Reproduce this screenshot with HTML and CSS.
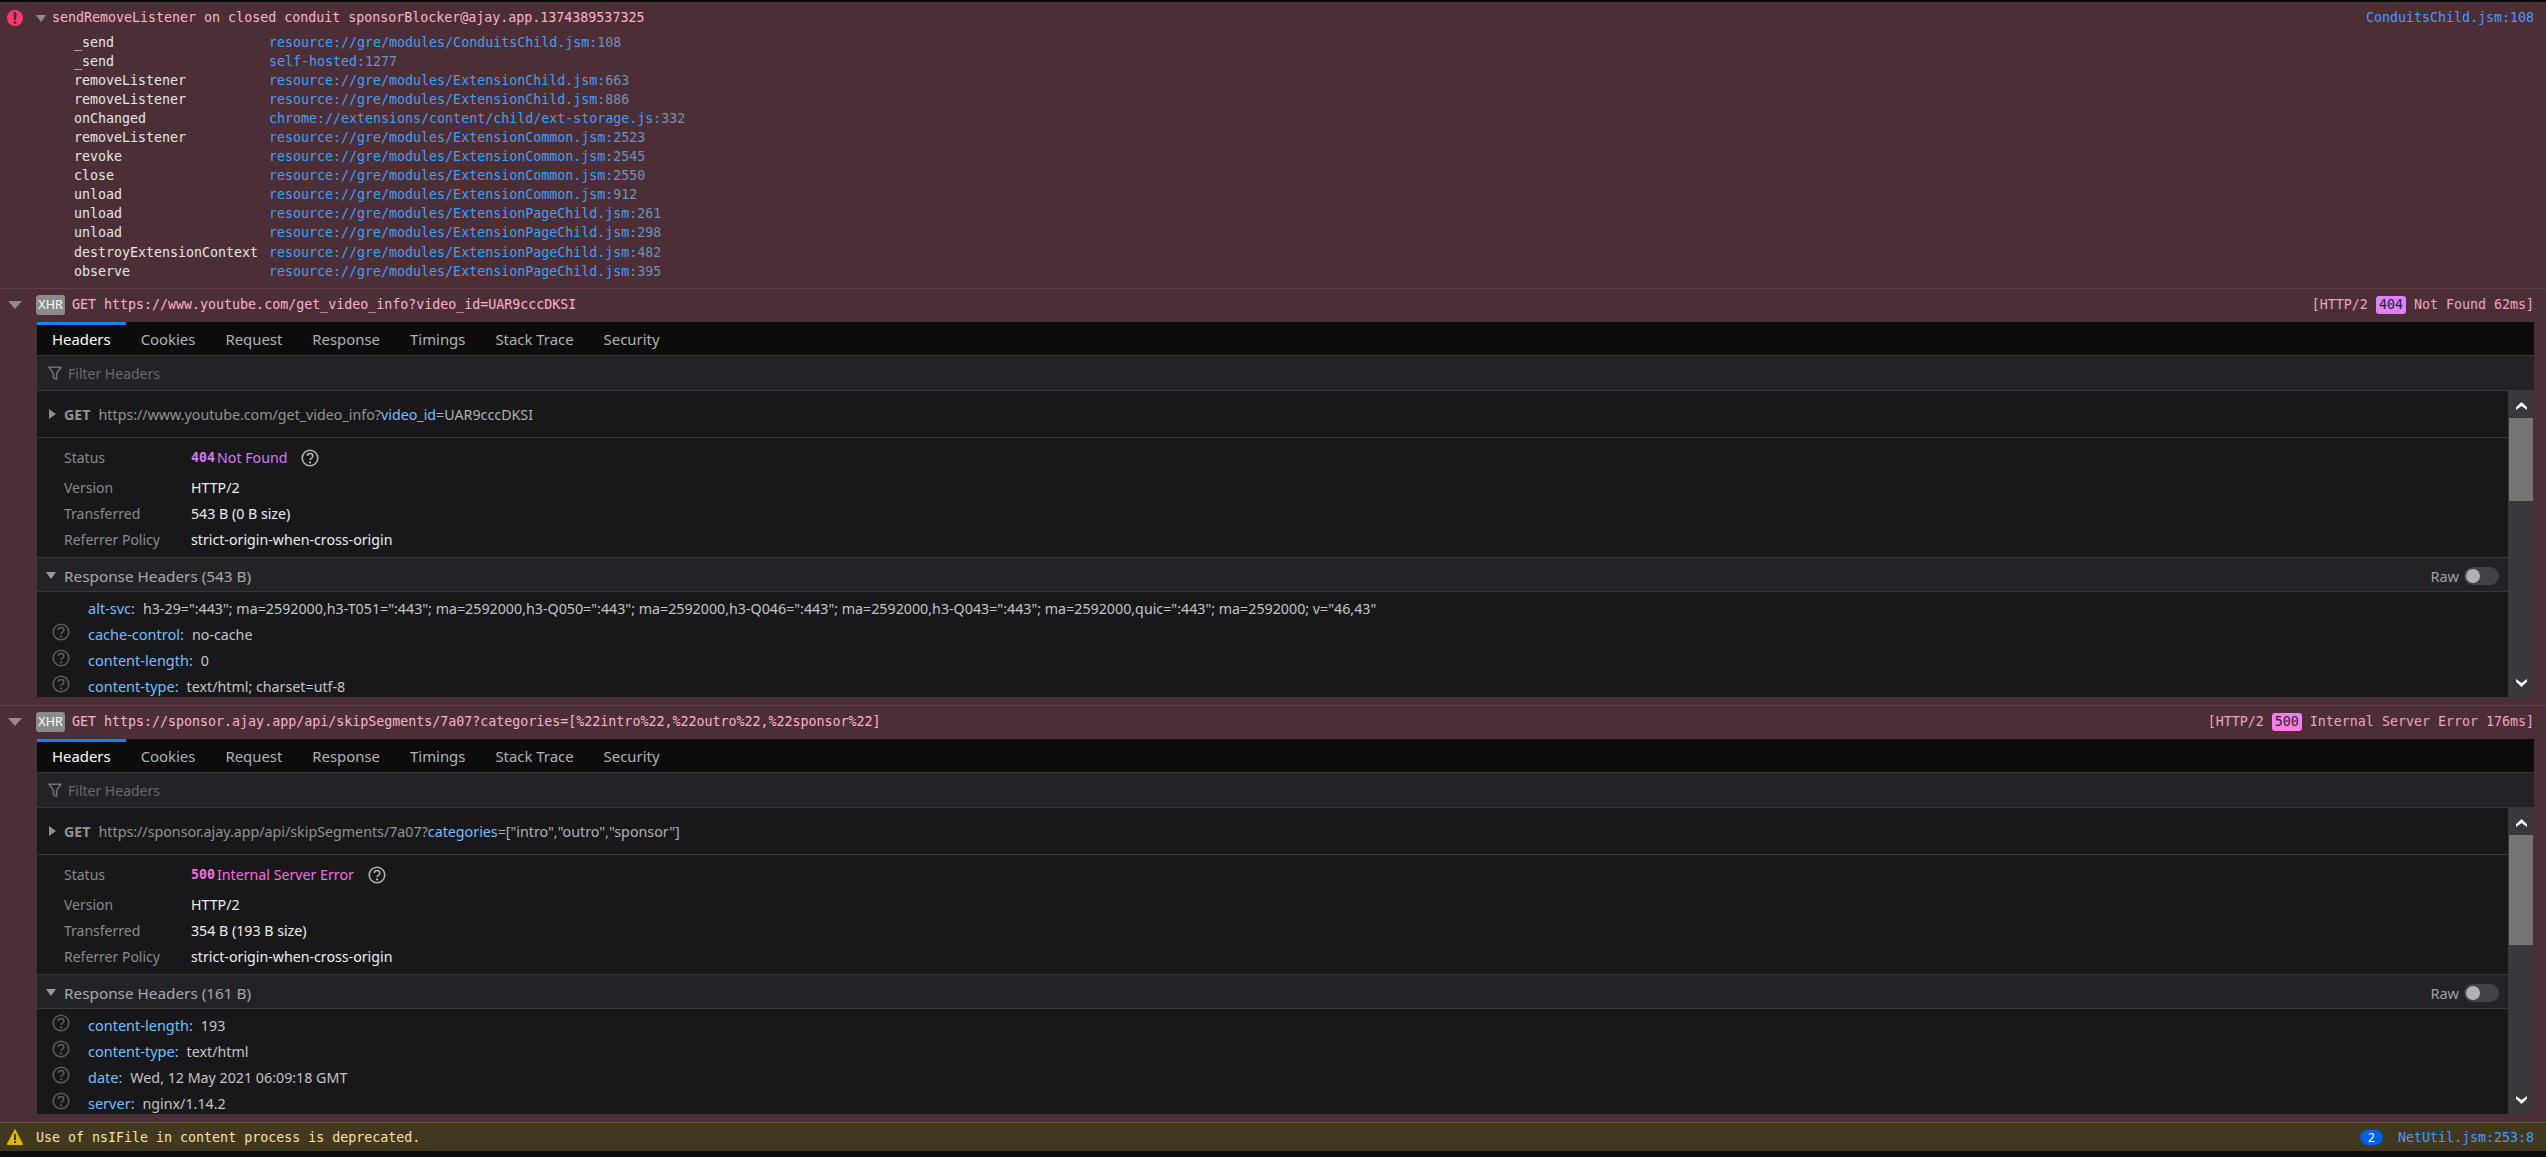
FILE: index.html
```html
<!DOCTYPE html>
<html lang="en">
<head>
<meta charset="utf-8">
<title>Browser Console</title>
<link rel="stylesheet" href="styles.css">
</head>
<body>
<svg class="defs" width="0" height="0" aria-hidden="true">
  <symbol id="help" viewBox="0 0 18 18"><circle cx="9" cy="9" r="7.8" fill="none" stroke="currentColor" stroke-width="1.6"/><path d="M6.3 7.1c0-1.6 1.2-2.6 2.8-2.6s2.7 1 2.7 2.4c0 1.2-.7 1.8-1.5 2.4-.7.5-1.1.9-1.1 1.8" fill="none" stroke="currentColor" stroke-width="1.6"/><circle cx="9" cy="13.4" r="1.1" fill="currentColor"/></symbol>
  <symbol id="filter" viewBox="0 0 14 15"><path d="M1 1.2h12L8.6 7.4v5.9l-3.2-1.6V7.4z" fill="none" stroke="currentColor" stroke-width="1.5" stroke-linejoin="round"/></symbol>
  <symbol id="chev-up" viewBox="0 0 11 8"><path d="M0 5.2 5.5 0 11 5.2V8L5.5 4 0 8z" fill="currentColor"/></symbol>
  <symbol id="chev-down" viewBox="0 0 11 8"><path d="M0 0 5.5 4 11 0v2.800L5.500 8 0 2.800z" fill="currentColor"/></symbol>
</svg>

<main class="console">
  <section class="row row-error">
    <div class="row-head row-head-first">
      <svg class="msg-icon" viewBox="0 0 16 16"><circle cx="8" cy="8" r="8" fill="#ff3b6b"/><path d="M6.300 3.800a1.700 1.700 0 0 1 3.400 0L9 10H7z" fill="#4c2f36"/><circle cx="8" cy="12.500" r="1.500" fill="#4c2f36"/></svg>
      <span class="tri tri-small"></span>
      <span class="mono msg-text">sendRemoveListener on closed conduit sponsorBlocker@ajay.app.1374389537325</span>
      <a class="mono source">ConduitsChild.jsm:108</a>
    </div>
    <div class="stack mono">
      <span class="fn">_send</span><a class="loc">resource://gre/modules/ConduitsChild.jsm:<i>108</i></a>
      <span class="fn">_send</span><a class="loc">self-hosted:<i>1277</i></a>
      <span class="fn">removeListener</span><a class="loc">resource://gre/modules/ExtensionChild.jsm:<i>663</i></a>
      <span class="fn">removeListener</span><a class="loc">resource://gre/modules/ExtensionChild.jsm:<i>886</i></a>
      <span class="fn">onChanged</span><a class="loc">chrome://extensions/content/child/ext-storage.js:<i>332</i></a>
      <span class="fn">removeListener</span><a class="loc">resource://gre/modules/ExtensionCommon.jsm:<i>2523</i></a>
      <span class="fn">revoke</span><a class="loc">resource://gre/modules/ExtensionCommon.jsm:<i>2545</i></a>
      <span class="fn">close</span><a class="loc">resource://gre/modules/ExtensionCommon.jsm:<i>2550</i></a>
      <span class="fn">unload</span><a class="loc">resource://gre/modules/ExtensionCommon.jsm:<i>912</i></a>
      <span class="fn">unload</span><a class="loc">resource://gre/modules/ExtensionPageChild.jsm:<i>261</i></a>
      <span class="fn">unload</span><a class="loc">resource://gre/modules/ExtensionPageChild.jsm:<i>298</i></a>
      <span class="fn gap">destroyExtensionContext</span><a class="loc gap">resource://gre/modules/ExtensionPageChild.jsm:<i>482</i></a>
      <span class="fn">observe</span><a class="loc">resource://gre/modules/ExtensionPageChild.jsm:<i>395</i></a>
    </div>
  </section>

  <section class="row row-net">
    <div class="row-head">
      <span class="tri tri-large"></span>
      <span class="xhr">XHR</span>
      <span class="mono msg-text">GET https://www.youtube.com/get_video_info?video_id=UAR9cccDKSI</span>
      <span class="mono meta">[HTTP/2 <b class="code code-404">404</b> Not Found 62ms]</span>
    </div>
    <div class="panel">
      <nav class="tabs">
        <span class="tab tab-active">Headers</span><span class="tab">Cookies</span><span class="tab">Request</span><span class="tab">Response</span><span class="tab">Timings</span><span class="tab">Stack Trace</span><span class="tab">Security</span>
      </nav>
      <div class="filter"><svg class="filter-icon"><use href="#filter"/></svg>Filter Headers</div>
      <div class="scroller">
        <div class="scroll-body">
          <div class="url-row"><span class="tri-right"></span><b class="method">GET</b><span class="url">https://www.youtube.com/get_video_info?<em>video_id</em><span class="url-val">=UAR9cccDKSI</span></span></div>
          <dl class="summary">
            <dt>Status</dt><dd class="status status-404"><b class="mono">404</b>Not Found<svg class="help-lg"><use href="#help"/></svg></dd>
            <dt>Version</dt><dd>HTTP/2</dd>
            <dt>Transferred</dt><dd>543 B (0 B size)</dd>
            <dt>Referrer Policy</dt><dd>strict-origin-when-cross-origin</dd>
          </dl>
          <div class="resp-head"><span class="tri tri-section"></span>Response Headers (543 B)<span class="raw">Raw<span class="toggle"></span></span></div>
          <ul class="headers">
            <li><span class="no-help"></span><span class="h-name">alt-svc:</span><span class="h-val">h3-29=":443"; ma=2592000,h3-T051=":443"; ma=2592000,h3-Q050=":443"; ma=2592000,h3-Q046=":443"; ma=2592000,h3-Q043=":443"; ma=2592000,quic=":443"; ma=2592000; v="46,43"</span></li>
            <li><svg class="help"><use href="#help"/></svg><span class="h-name">cache-control:</span><span class="h-val">no-cache</span></li>
            <li><svg class="help"><use href="#help"/></svg><span class="h-name">content-length:</span><span class="h-val">0</span></li>
            <li><svg class="help"><use href="#help"/></svg><span class="h-name">content-type:</span><span class="h-val">text/html; charset=utf-8</span></li>
          </ul>
        </div>
        <div class="scrollbar"><svg class="arrow arrow-up"><use href="#chev-up"/></svg><span class="thumb thumb-short"></span><svg class="arrow arrow-down"><use href="#chev-down"/></svg></div>
      </div>
    </div>
  </section>

  <section class="row row-net row-last">
    <div class="row-head">
      <span class="tri tri-large"></span>
      <span class="xhr">XHR</span>
      <span class="mono msg-text">GET https://sponsor.ajay.app/api/skipSegments/7a07?categories=[%22intro%22,%22outro%22,%22sponsor%22]</span>
      <span class="mono meta">[HTTP/2 <b class="code code-500">500</b> Internal Server Error 176ms]</span>
    </div>
    <div class="panel">
      <nav class="tabs">
        <span class="tab tab-active">Headers</span><span class="tab">Cookies</span><span class="tab">Request</span><span class="tab">Response</span><span class="tab">Timings</span><span class="tab">Stack Trace</span><span class="tab">Security</span>
      </nav>
      <div class="filter"><svg class="filter-icon"><use href="#filter"/></svg>Filter Headers</div>
      <div class="scroller">
        <div class="scroll-body">
          <div class="url-row"><span class="tri-right"></span><b class="method">GET</b><span class="url">https://sponsor.ajay.app/api/skipSegments/7a07?<em>categories</em><span class="url-val">=["intro","outro","sponsor"]</span></span></div>
          <dl class="summary">
            <dt>Status</dt><dd class="status status-500"><b class="mono">500</b>Internal Server Error<svg class="help-lg"><use href="#help"/></svg></dd>
            <dt>Version</dt><dd>HTTP/2</dd>
            <dt>Transferred</dt><dd>354 B (193 B size)</dd>
            <dt>Referrer Policy</dt><dd>strict-origin-when-cross-origin</dd>
          </dl>
          <div class="resp-head"><span class="tri tri-section"></span>Response Headers (161 B)<span class="raw">Raw<span class="toggle"></span></span></div>
          <ul class="headers">
            <li><svg class="help"><use href="#help"/></svg><span class="h-name">content-length:</span><span class="h-val">193</span></li>
            <li><svg class="help"><use href="#help"/></svg><span class="h-name">content-type:</span><span class="h-val">text/html</span></li>
            <li><svg class="help"><use href="#help"/></svg><span class="h-name">date:</span><span class="h-val">Wed, 12 May 2021 06:09:18 GMT</span></li>
            <li><svg class="help"><use href="#help"/></svg><span class="h-name">server:</span><span class="h-val">nginx/1.14.2</span></li>
          </ul>
        </div>
        <div class="scrollbar"><svg class="arrow arrow-up"><use href="#chev-up"/></svg><span class="thumb"></span><svg class="arrow arrow-down"><use href="#chev-down"/></svg></div>
      </div>
    </div>
  </section>

  <section class="row row-warn">
    <svg class="msg-icon warn-icon" viewBox="0 0 16 16"><path d="M8 .6 15.800 15.400H.2z" fill="#e0b700" stroke="#e0b700" stroke-linejoin="round"/><rect x="7" y="5" width="2" height="6" fill="#42381f"/><rect x="7" y="12" width="2" height="2" fill="#42381f"/></svg>
    <span class="mono warn-text">Use of nsIFile in content process is deprecated.</span>
    <span class="count">2</span>
    <a class="mono source warn-source">NetUtil.jsm:253:8</a>
  </section>
</main>
</body>
</html>
```
FILE: styles.css
```css
* { box-sizing: border-box; }
html, body { margin: 0; height: 100%; background: #0c0c0d; overflow: hidden; }
body { font-family: "Noto Sans", "Open Sans", sans-serif; font-size: 14.25px; color: #e0e0e2; }
.defs { position: absolute; }
a { color: inherit; text-decoration: none; }
ul, dl, dd { margin: 0; padding: 0; list-style: none; }
em, i { font-style: normal; }

.mono { font-family: "DejaVu Sans Mono", "Liberation Mono", monospace; font-size: 13.3px; }

.console { display: flex; flex-direction: column; padding-top: 2px; }
.row { background: #4c2f36; border-bottom: 1px solid #6b3a48; }
.row-error { height: 287px; }
.row-net { height: 417px; }
.row-last { height: 416px; border-bottom: none; }

.row-head { display: flex; align-items: center; height: 33px; padding: 0 12px 2px 0; }
.row-head-first { height: 31px; padding: 0 12px 0 7px; }
.msg-icon { width: 16px; height: 16px; flex: none; }
.msg-text { color: #ffb3c9; white-space: pre; }

.tri { flex: none; width: 0; height: 0; border-style: solid; border-color: #8e8a8e transparent transparent; }
.tri-small { margin: 1px 6px 0 13px; border-width: 7px 5px 0; }
.tri-large { margin: 0 14px 0 8px; border-width: 8px 7px 0; }
.tri-section { border-width: 7px 5.500px 0; border-top-color: #9a9a9e; position: absolute; left: 9px; top: 14px; }

.source { margin-left: auto; color: #4a9bf5; }
.meta { margin-left: auto; color: #efa5c0; white-space: pre; }
.code { display: inline-block; height: 18px; line-height: 18px; padding: 0 3px; border-radius: 3px; font-weight: 400; color: #27212f; }
.code-404 { background: #df80ff; }
.code-500 { background: #ff7de9; }

.xhr { flex: none; width: 29px; height: 20px; margin-right: 7px; border-radius: 3px; background: #8c8b8c; color: #fff; font-size: 12.500px; line-height: 20px; text-align: center; }

.stack { display: grid; grid-template-columns: 195px 1fr; padding-left: 74px; line-height: 19px; }
.fn { color: #e8e4e6; white-space: pre; }
.loc { color: #4a9bf5; white-space: pre; }
.loc i { color: #6f8fbd; }
.gap { padding-top: 1px; }

.panel { height: 375px; margin: 0 12px 0 37px; display: flex; flex-direction: column; background: #18181a; overflow: hidden; }

.tabs { flex: none; display: flex; height: 34px; background: #0c0c0d; border-bottom: 1px solid #38383d; font-size: 14.900px; }
.tab { padding: 0 15px; line-height: 28px; border-top: 3px solid transparent; color: #b1b1b3; white-space: pre; }
.tab-active { color: #fff; border-top-color: #0a84ff; }

.filter { flex: none; display: flex; align-items: center; height: 35px; padding-left: 11px; background: #232327; border-bottom: 1px solid #38383d; color: #6a6a6e; font-size: 14px; }
.filter-icon { width: 14px; height: 15px; margin-right: 6px; color: #737377; }

.scroller { flex: 1; display: flex; min-height: 0; }
.scroll-body { flex: 1; min-width: 0; overflow: hidden; }

.url-row { display: flex; align-items: center; height: 47px; padding-left: 12px; border-bottom: 1px solid #38383d; color: #939395; }
.tri-right { width: 0; height: 0; margin-right: 8px; border-style: solid; border-width: 5px 0 5px 7px; border-color: transparent transparent transparent #8e8e92; }
.method { margin-right: 8px; font-weight: 700; }
.url em { color: #75bfff; }
.url-val { color: #b1b1b3; }

.summary { display: grid; grid-template-columns: 127px 1fr; grid-template-rows: 33px 26px 26px 26px; height: 120px; padding: 3px 0 0 27px; border-bottom: 1px solid #38383d; align-items: center; font-size: 14px; }
.summary dt { color: #8a8a8e; }
.summary dd { color: #ededf0; font-size: 14.200px; }
.status { display: flex; align-items: center; }
.status b { margin-right: 2px; font-weight: 700; }
.summary .status-404 { color: #d57bf5; }
.summary .status-500 { color: #f56ee0; }
.help-lg { width: 18px; height: 18px; margin-left: 14px; color: #b1b1b3; }

.resp-head { position: relative; display: flex; align-items: center; height: 34px; padding: 2px 9px 0 27px; background: #232327; border-bottom: 1px solid #38383d; color: #a8a8ac; font-size: 15.300px; }
.raw { margin-left: auto; display: flex; align-items: center; gap: 5px; color: #a0a0a4; font-size: 14.500px; }
.toggle { display: block; width: 35px; height: 18px; padding: 2px; border-radius: 9px; background: #434347; }
.toggle::before { content: ""; display: block; width: 14px; height: 14px; border-radius: 50%; background: #b1b1b3; }

.headers { padding-top: 3px; }
.headers li { display: flex; align-items: center; height: 26px; padding-left: 15px; white-space: pre; }
.help { width: 18px; height: 18px; margin-top: -4px; color: #5c5c60; flex: none; }
.no-help { width: 18px; flex: none; }
.h-name { margin-left: 18px; color: #75bfff; font-size: 14.500px; }
.h-val { margin-left: 8px; color: #c4c4c8; }

.scrollbar { position: relative; flex: none; width: 26px; background: #38383d; }
.arrow { position: absolute; left: 8px; width: 11px; height: 8px; color: #fff; }
.arrow-up { top: 11px; }
.arrow-down { bottom: 10px; }
.thumb { position: absolute; left: 1px; top: 27px; width: 24px; height: 110px; background: #757575; }
.thumb-short { height: 83px; }

.row-warn { display: flex; align-items: center; height: 29px; padding: 0 12px 0 7px; background: #42381f; border-top: 1px solid #665a2d; border-bottom: none; }
.warn-icon { margin-right: 13px; }
.warn-text { color: #fce19f; white-space: pre; }
.count { margin-left: auto; width: 23px; height: 15px; border-radius: 8px; background: #0060df; color: #fff; font-size: 12px; line-height: 15px; text-align: center; }
.warn-source { margin-left: 15px; }
```
